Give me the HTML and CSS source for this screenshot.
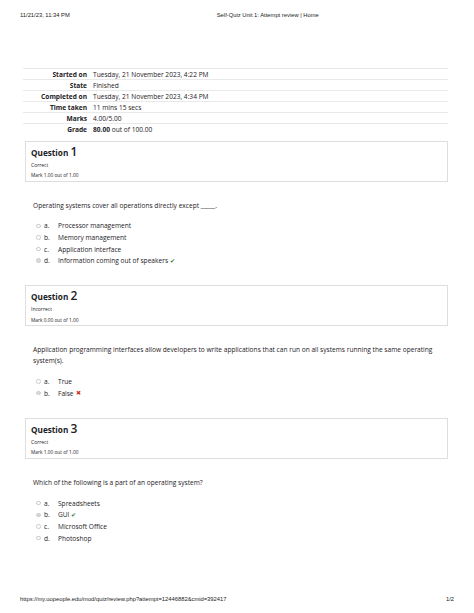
FILE: index.html
```html
<!DOCTYPE html>
<html lang="en">
<head>
    <meta charset="UTF-8">
    <title>Self-Quiz Unit 1: Attempt review | Home</title>
    <link rel="stylesheet" href="styles.css">
</head>
<body>
<div class="page">
    <div class="printhead">
        <span>11/21/23, 11:34 PM</span>
        <span>Self-Quiz Unit 1: Attempt review | Home</span>
    </div>

    <div class="content">
        <table class="summary">
            <tr><th>Started on</th><td>Tuesday, 21 November 2023, 4:22 PM</td></tr>
            <tr><th>State</th><td>Finished</td></tr>
            <tr><th>Completed on</th><td>Tuesday, 21 November 2023, 4:34 PM</td></tr>
            <tr><th>Time taken</th><td>11 mins 15 secs</td></tr>
            <tr><th>Marks</th><td>4.00/5.00</td></tr>
            <tr><th>Grade</th><td><b>80.00</b> out of 100.00</td></tr>
        </table>

        <!-- question 1 -->
        <div class="que">
            <div class="info">
                <h3>Question <span class="qno">1</span></h3>
                <div class="state">Correct</div>
                <div class="grade">Mark 1.00 out of 1.00</div>
            </div>
            <div class="qtext">Operating systems cover all operations directly except _____.</div>
            <ul class="answer">
                <li><i class="radio"></i><span class="lt">a.</span>Processor management</li>
                <li><i class="radio"></i><span class="lt">b.</span>Memory management</li>
                <li><i class="radio"></i><span class="lt">c.</span>Application interface</li>
                <li><i class="radio on"></i><span class="lt">d.</span>Information coming out of speakers <span class="ok">&#10004;</span></li>
            </ul>
        </div>

        <!-- question 2 -->
        <div class="que">
            <div class="info">
                <h3>Question <span class="qno">2</span></h3>
                <div class="state">Incorrect</div>
                <div class="grade">Mark 0.00 out of 1.00</div>
            </div>
            <div class="qtext">Application programming interfaces allow developers to write applications that can run on all systems running the same operating system(s).</div>
            <ul class="answer">
                <li><i class="radio"></i><span class="lt">a.</span>True</li>
                <li><i class="radio on"></i><span class="lt">b.</span>False <span class="bad">&#10006;</span></li>
            </ul>
        </div>

        <!-- question 3 -->
        <div class="que">
            <div class="info">
                <h3>Question <span class="qno">3</span></h3>
                <div class="state">Correct</div>
                <div class="grade">Mark 1.00 out of 1.00</div>
            </div>
            <div class="qtext">Which of the following is a part of an operating system?</div>
            <ul class="answer">
                <li><i class="radio"></i><span class="lt">a.</span>Spreadsheets</li>
                <li><i class="radio on"></i><span class="lt">b.</span>GUI <span class="ok">&#10004;</span></li>
                <li><i class="radio"></i><span class="lt">c.</span>Microsoft Office</li>
                <li><i class="radio"></i><span class="lt">d.</span>Photoshop</li>
            </ul>
        </div>
    </div>

    <div class="printfoot">
        <span>https://my.uopeople.edu/mod/quiz/review.php?attempt=12446882&amp;cmid=392417</span>
        <span>1/2</span>
    </div>
</div>
</body>
</html>
```

FILE: styles.css
```css
*{
    margin:0;
    padding:0;
    box-sizing:border-box;
}
body{
    background:#fff;
    color:#1d2125;
    font-family:"Open Sans","Noto Sans",sans-serif;
}
.page{
    display:flex;
    flex-direction:column;
    width:474px;
    height:613px;
}
.printhead,
.printfoot{
    display:flex;
    padding:0 20px;
    font-family:"Liberation Sans",Arial,sans-serif;
    font-size:5.8px;
    color:#222;
}
.printhead{
    padding-top:12px;
    gap:147px;
}
.printfoot{
    margin-top:auto;
    padding-bottom:11px;
    justify-content:space-between;
    padding-right:20px;
}
.content{
    padding:0 26px 0 23px;
}
.summary{
    margin-top:50px;
    width:100%;
    border-collapse:collapse;
    font-size:6.6px;
}
.summary tr{
    height:11px;
    border-top:1px solid #e9e9e9;
}
.summary th{
    width:70px;
    padding-right:6px;
    text-align:right;
    font-weight:700;
}
.summary td{
    text-align:left;
}
.que .info{
    margin:6px 0 0 2px;
    padding:3px 5px 0;
    border:1px solid #dedede;
    background:#fff;
}
.que + .que .info{
    margin-top:19px;
}
.info h3{
    height:14px;
    line-height:14px;
    font-size:8.2px;
    font-weight:700;
}
.info .qno{
    font-size:12px;
    font-weight:600;
}
.info .state{
    height:11.5px;
    line-height:12px;
    font-size:5px;
}
.info .grade{
    height:10.5px;
    line-height:11px;
    font-size:4.8px;
}
.qtext{
    margin:19px 0 0 10px;
    font-size:6.6px;
    line-height:10.6px;
}
.answer{
    margin:9px 0 0 13px;
    list-style-type:none;
    font-size:6.6px;
}
.answer li{
    display:flex;
    align-items:center;
    height:11.6px;
}
.answer .radio{
    width:4.5px;
    height:4.5px;
    margin-right:3.5px;
    border:0.6px solid #cdcdcd;
    border-radius:50%;
}
.answer .radio.on{
    background:#d9d9d9;
    border-color:#d0d0d0;
}
.answer .lt{
    width:14px;
}
.answer .ok{
    margin-left:2px;
    color:#357a32;
    font-size:6px;
}
.answer .bad{
    margin-left:2px;
    color:#ca3120;
    font-size:6px;
}
```
